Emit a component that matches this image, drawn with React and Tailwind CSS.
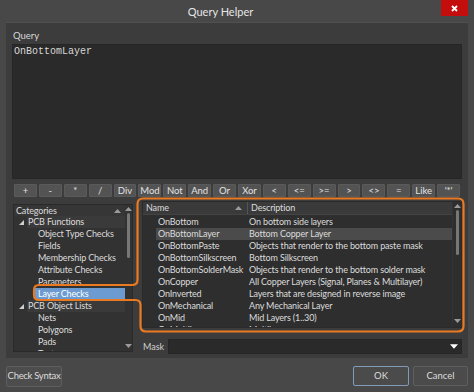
import React from "react";

const ops = ["+", "-", "*", "/", "Div", "Mod", "Not", "And", "Or", "Xor", "<", "<=", ">=", ">", "<>", "=", "Like", "'*'"];

const cats = [
  { t: "PCB Functions", group: true },
  { t: "Object Type Checks" },
  { t: "Fields" },
  { t: "Membership Checks" },
  { t: "Attribute Checks" },
  { t: "Parameters" },
  { t: "Layer Checks", sel: true },
  { t: "PCB Object Lists", group: true },
  { t: "Nets" },
  { t: "Polygons" },
  { t: "Pads" },
  { t: "Text" },
];

const rows = [
  ["OnBottom", "On bottom side layers"],
  ["OnBottomLayer", "Bottom Copper Layer", true],
  ["OnBottomPaste", "Objects that render to the bottom paste mask"],
  ["OnBottomSilkscreen", "Bottom Silkscreen"],
  ["OnBottomSolderMask", "Objects that render to the bottom solder mask"],
  ["OnCopper", "All Copper Layers (Signal, Planes & Multilayer)"],
  ["OnInverted", "Layers that are designed in reverse image"],
  ["OnMechanical", "Any Mechanical Layer"],
  ["OnMid", "Mid Layers (1..30)"],
  ["OnMultilayer", "Multilayer"],
];

function Tri() {
  return (
    <svg width="5" height="5" viewBox="0 0 5 5" className="shrink-0">
      <path d="M5 0 L5 5 L0 5 Z" fill="#cfcfcf" />
    </svg>
  );
}

function Up() {
  return (
    <svg width="7" height="4" viewBox="0 0 7 4" className="shrink-0">
      <path d="M0 4 L3.5 0 L7 4 Z" fill="#9a9a9a" />
    </svg>
  );
}
function Down({ c = "#9a9a9a", w = 7, h = 4 }) {
  return (
    <svg width={w} height={h} viewBox="0 0 7 4" className="shrink-0">
      <path d="M0 0 L3.5 4 L7 0 Z" fill={c} />
    </svg>
  );
}

export default function App() {
  return (
    <div
      className="relative w-[474px] h-[392px] bg-[#484848] flex flex-col overflow-hidden text-[#dcdcdc]"
      style={{ fontFamily: "Lato, 'Open Sans', sans-serif" }}
    >
      {/* title bar */}
      <div className="flex h-[22px] items-start">
        <div className="flex-1 text-center text-[11px] leading-[24px] text-[#e6e6e6]">Query Helper</div>
        <div className="w-[27px] h-[16px] bg-[#c40d0d] flex items-center justify-center mr-[6px]">
          <svg width="7" height="7" viewBox="0 0 7 7">
            <path d="M1 1 L6 6 M6 1 L1 6" stroke="#fff" strokeWidth="1.8" />
          </svg>
        </div>
      </div>

      {/* main panel */}
      <div className="mx-[6px] h-[336px] bg-[#3c3c3c] border-t border-[#505050] flex flex-col">
        <div className="px-[7px] pt-[7px] text-[9.5px] leading-[11px] text-[#d6d6d6]">Query</div>
        <div
          className="mx-[6px] mt-[3px] h-[135px] bg-[#2a2a2a] border border-[#262626] px-[1px] text-[10px] leading-[14px] text-[#d8d8d8]"
          style={{ fontFamily: "'Liberation Mono', monospace" }}
        >
          OnBottomLayer
        </div>

        {/* operator buttons */}
        <div className="flex gap-[2px] mx-[8px] mt-[5px]">
          {ops.map((o) => (
            <div
              key={o}
              className="flex-1 h-[13px] bg-[#535353] border border-[#5a5a5a] rounded-[1px] flex items-center justify-center text-[9.5px] leading-none text-[#e2e2e2]"
            >
              {o}
            </div>
          ))}
        </div>

        {/* lower area */}
        <div className="flex items-start mt-[4px] pl-[7px] pr-[6px] gap-[9px]">
          {/* categories */}
          <div className="mt-[3px] w-[120px] h-[148px] bg-[#323232] border border-[#2a2a2a] flex text-[9px] tracking-[-0.15px] leading-[12px] overflow-hidden">
            <div className="flex-1 flex flex-col min-w-0">
              <div className="h-[11px] shrink-0 flex items-center justify-between pl-[2px] pr-[4px] bg-[#363636] leading-[11px]">
                <span>Categories</span>
                <Up />
              </div>
              {cats.map((c) =>
                c.group ? (
                  <div key={c.t} className="h-[12px] shrink-0 flex items-center gap-[3px] pl-[5px]">
                    <Tri />
                    <span className="flex-1 bg-[#3a3a3a] pl-[1px] whitespace-nowrap">{c.t}</span>
                  </div>
                ) : (
                  <div key={c.t} className="h-[12px] shrink-0 flex items-center pl-[21px]">
                    <span
                      className={
                        "flex-1 pl-[3px] whitespace-nowrap h-[12px] " +
                        (c.sel ? "bg-[#6b9bd0] text-white" : "")
                      }
                    >
                      {c.t}
                    </span>
                  </div>
                )
              )}
            </div>
            <div className="w-[6px] flex flex-col items-center pt-[2px] pb-[3px] mr-[1px]">
              <Up />
              <div className="w-[3px] h-[45px] mt-[2px] bg-[#777] rounded-full" />
              <div className="flex-1" />
              <Down />
            </div>
          </div>

          {/* right column */}
          <div className="flex-1 flex flex-col">
            <div className="h-[127px] bg-[#2e2e2e] border border-[#2a2a2a] flex text-[9px] tracking-[-0.15px] leading-[12px] overflow-hidden">
              <div className="flex-1 flex flex-col min-w-0">
                <div className="h-[13px] shrink-0 flex items-center bg-[#3a3a3a] border-b border-[#444]">
                  <div className="w-[105px] flex items-center justify-between pl-[3px] pr-[5px] border-r border-[#555]">
                    <span>Name</span>
                    <Up />
                  </div>
                  <span className="pl-[3px]">Description</span>
                </div>
                <div className="mt-[1px]">
                  {rows.map(([n, d, s]) => (
                    <div key={n} className="h-[12px] flex pl-[13px]">
                      <div className={"flex flex-1 whitespace-nowrap " + (s ? "bg-[#4b4b4b]" : "")}>
                        <span className="w-[93px] pl-[2px] shrink-0">{n}</span>
                        <span>{d}</span>
                      </div>
                    </div>
                  ))}
                </div>
              </div>
              <div className="w-[9px] flex flex-col items-center pt-[2px] pb-[4px] border-l border-[#333]">
                <Up />
                <div className="w-[3px] h-[45px] mt-[2px] bg-[#777] rounded-full" />
                <div className="flex-1" />
                <Down />
              </div>
            </div>

            <div className="flex items-center mt-[11px] h-[15px]">
              <span className="w-[26px] pl-[1px] text-[9px] text-[#cfcfcf]">Mask</span>
              <div className="flex-1 h-[15px] bg-[#2a2a2a] border border-[#262626] flex items-center justify-end pr-[3px]">
                <Down c="#ffffff" w={8} h={5} />
              </div>
            </div>
          </div>
        </div>
      </div>

      {/* bottom buttons */}
      <div className="flex items-start mt-[8px] px-[6px] text-[9.5px]">
        <div className="w-[56px] h-[21px] bg-[#4d4d4d] border border-[#5e5e5e] rounded-[2px] flex items-center justify-center whitespace-nowrap tracking-[-0.3px]">
          Check Syntax
        </div>
        <div className="flex-1" />
        <div className="w-[56px] h-[20px] bg-[#4b4b4b] border border-[#7f9bb8] rounded-[2px] flex items-center justify-center mr-[4px]">
          OK
        </div>
        <div className="w-[55px] h-[20px] bg-[#4b4b4b] border border-[#5e5e5e] rounded-[2px] flex items-center justify-center">
          Cancel
        </div>
      </div>

      {/* orange highlight annotation */}
      <svg className="absolute left-0 top-0 pointer-events-none" width="474" height="392">
        <path
          d="M143 198.5 H458 Q463.5 198.5 463.5 204 V326 Q463.5 331.5 458 331.5 H146 Q140.5 331.5 140.5 326 V305 Q140.5 300 135.5 300 H39 Q34 300 34 295 V290 Q34 285 39 285 H132 Q137.5 285 137.5 280 V204 Q137.5 198.5 143 198.5 Z"
          fill="none"
          stroke="#ea7a22"
          strokeWidth="2.2"
        />
      </svg>
    </div>
  );
}
